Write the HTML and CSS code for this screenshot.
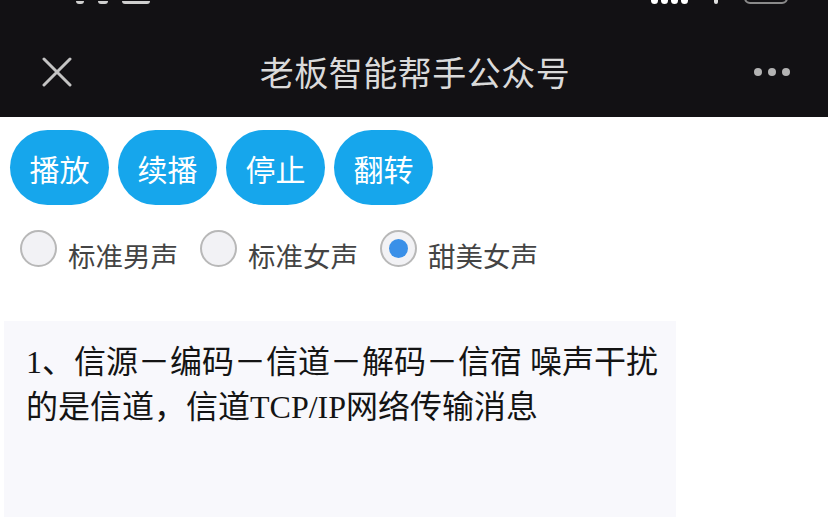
FILE: index.html
```html
<!DOCTYPE html>
<html lang="zh">
<head>
<meta charset="utf-8">
<link rel="stylesheet" href="styles.css">
</head>
<body>
<header class="header">
  <div class="status">
    <span class="time-marks"><i class="m1"></i><i class="m2"></i><i class="m3"></i></span>
    <span class="status-icons">
      <span class="signal"><i></i><i></i><i></i><i></i></span>
      <span class="wifi"></span>
      <span class="battery"></span>
    </span>
  </div>
  <div class="nav">
    <svg class="close" width="30" height="30" viewBox="0 0 30 30">
      <path d="M2 2 L28 28 M28 2 L2 28" stroke="#c4c4c4" stroke-width="3" stroke-linecap="round" fill="none"/>
    </svg>
    <div class="title">老板智能帮手公众号</div>
    <div class="more"><i></i><i></i><i></i></div>
  </div>
</header>
<main class="main">
  <div class="buttons">
    <button class="btn">播放</button>
    <button class="btn">续播</button>
    <button class="btn">停止</button>
    <button class="btn">翻转</button>
  </div>
  <div class="radios">
    <label class="radio"><span class="dot"></span><span class="label">标准男声</span></label>
    <label class="radio"><span class="dot"></span><span class="label">标准女声</span></label>
    <label class="radio checked"><span class="dot"></span><span class="label">甜美女声</span></label>
  </div>
  <div class="textbox">1、信源－编码－信道－解码－信宿 噪声干扰的是信道，信道TCP/IP网络传输消息</div>
</main>
</body>
</html>
```
FILE: styles.css
```css
html, body {
  margin: 0;
  padding: 0;
  background: #ffffff;
  font-family: "Noto Sans CJK SC", "Noto Sans", sans-serif;
}
.header {
  height: 117px;
  background: #121114;
  overflow: hidden;
  display: flex;
  flex-direction: column;
}
.status {
  height: 4px;
  overflow: hidden;
  display: flex;
  align-items: flex-end;
  justify-content: space-between;
  padding: 0 40px 0 76px;
}
.time-marks {
  display: flex;
  align-items: flex-end;
  gap: 14px;
  height: 4px;
}
.time-marks i {
  display: block;
  height: 3px;
  background: #cfcfcf;
  border-radius: 0 0 3px 3px;
}
.time-marks .m1 { width: 8px; }
.time-marks .m2 { width: 10px; }
.time-marks .m3 { width: 28px; }
.status-icons {
  display: flex;
  align-items: flex-end;
  gap: 26px;
  flex: none;
}
.signal {
  display: flex;
  gap: 3px;
}
.signal i {
  width: 7px;
  height: 12px;
  border-radius: 4px;
  background: #ffffff;
}
.wifi {
  width: 4px;
  height: 8px;
  border-radius: 2px;
  background: #e0e0e0;
}
.battery {
  width: 44px;
  height: 20px;
  border: 2px solid #8a8a8a;
  border-radius: 6px;
  box-sizing: border-box;
}
.nav {
  flex: 1;
  padding-top: 23px;
  display: flex;
  align-items: center;
  justify-content: space-between;
  padding-left: 42px;
  padding-right: 38px;
}
.close {
  flex: none;
  display: block;
}
.title {
  color: #dadada;
  font-size: 34px;
  letter-spacing: 0.5px;
  line-height: 40px;
  margin-left: 4px;
}
.more {
  display: flex;
  gap: 6px;
  width: 36px;
}
.more i {
  width: 8px;
  height: 8px;
  border-radius: 50%;
  background: #b3b3b3;
}
.main {
  padding-top: 13px;
}
.buttons {
  display: flex;
  gap: 9px;
  padding-left: 10px;
}
.btn {
  width: 99px;
  height: 75px;
  border: none;
  border-radius: 38px;
  background: #16a6ec;
  color: #ffffff;
  font-family: "Noto Sans CJK SC", sans-serif;
  font-size: 30px;
  padding: 0;
  margin: 0;
}
.radios {
  display: flex;
  gap: 22px;
  padding-left: 20px;
  margin-top: 26px;
  height: 40px;
  align-items: center;
}
.radio {
  display: flex;
  align-items: center;
  gap: 11px;
}
.dot {
  width: 37px;
  height: 37px;
  box-sizing: border-box;
  border: 2px solid #b8b8b8;
  border-radius: 50%;
  background: #f2f2f5;
  display: flex;
  align-items: center;
  justify-content: center;
  margin-top: -6px;
}
.checked .dot::after {
  content: "";
  width: 19px;
  height: 19px;
  border-radius: 50%;
  background: #3a90e8;
}
.label {
  font-size: 27.5px;
  color: #444444;
  line-height: 32px;
  margin-top: 8px;
}
.textbox {
  margin: 50px 0 0 4px;
  width: 672px;
  height: 200px;
  box-sizing: border-box;
  background: #f8f8fc;
  padding: 19px 16px 0 22px;
  font-family: "Liberation Serif", "Noto Sans CJK SC", serif;
  font-size: 32px;
  line-height: 45px;
  color: #141414;
}
```
